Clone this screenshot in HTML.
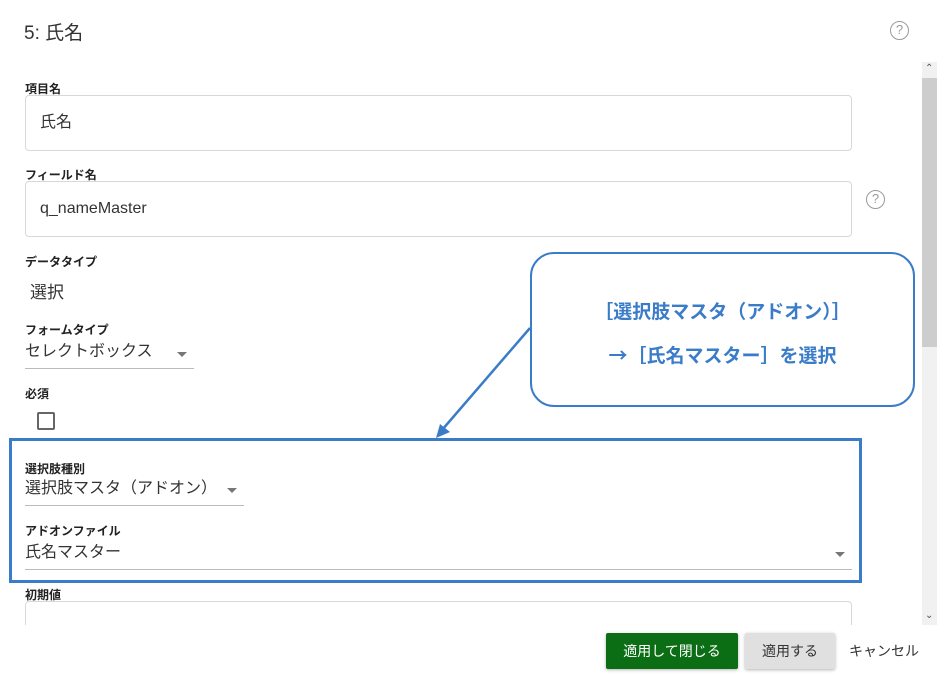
<!DOCTYPE html>
<html><head><meta charset="utf-8"><style>
*{margin:0;padding:0;box-sizing:border-box}
body{width:946px;height:675px;background:#fff;position:relative;overflow:hidden;font-family:"Liberation Sans","Noto Sans CJK JP",sans-serif;color:#333}
.a{position:absolute}
.lbl{position:absolute;font-size:12px;font-weight:bold;color:#222;left:25px}
.inp{position:absolute;left:25px;width:827px;height:56px;border:1px solid #d8d8d8;border-radius:4px;font-size:16px;padding:0 14px;line-height:54px;color:#333}
.sel{position:absolute;left:25px;font-size:16px;border-bottom:1px solid #bbb;height:30px;line-height:26px;color:#333}
.tri{position:absolute;width:0;height:0;border-left:5px solid transparent;border-right:5px solid transparent;border-top:5px solid #777}
.q{position:absolute;width:19px;height:19px;border:1.5px solid #999;border-radius:50%;color:#999;font-size:13px;text-align:center;line-height:16px}
</style></head><body>
<div class="a" style="left:24px;top:18px;font-size:19px;color:#333">5: 氏名</div>
<div class="q" style="left:890px;top:21px">?</div>

<div class="a" style="left:922px;top:62px;width:15px;height:563px;background:#f1f1f1"></div>
<div class="a" style="left:922px;top:78px;width:15px;height:269px;background:#cdcdcd"></div>
<div class="a" style="left:925px;top:63px;font-size:10px;color:#555">&#8963;</div>
<div class="a" style="left:925px;top:610px;font-size:10px;color:#555">&#8964;</div>

<div class="lbl" style="top:80px">項目名</div>
<div class="inp" style="top:95px">氏名</div>
<div class="lbl" style="top:166px">フィールド名</div>
<div class="inp" style="top:181px">q_nameMaster</div>
<div class="q" style="left:866px;top:190px">?</div>

<div class="lbl" style="top:253px">データタイプ</div>
<div class="a" style="left:30px;top:278px;font-size:17px">選択</div>
<div class="lbl" style="top:321px">フォームタイプ</div>
<div class="sel" style="top:339px;width:169px">セレクトボックス</div>
<div class="tri" style="left:177px;top:352px"></div>
<div class="lbl" style="top:385px">必須</div>
<div class="a" style="left:37px;top:412px;width:18px;height:18px;border:2px solid #666;border-radius:2px"></div>

<div class="a" style="left:9px;top:438px;width:853px;height:145px;border:3px solid #3a7cc8"></div>
<div class="lbl" style="top:460px">選択肢種別</div>
<div class="sel" style="top:476px;width:219px">選択肢マスタ（アドオン）</div>
<div class="tri" style="left:227px;top:488px"></div>
<div class="lbl" style="top:522px">アドオンファイル</div>
<div class="sel" style="top:540px;width:827px">氏名マスター</div>
<div class="tri" style="left:835px;top:552px"></div>

<div class="lbl" style="top:586px">初期値</div>
<div class="a" style="left:25px;top:601px;width:827px;height:40px;border:1px solid #d8d8d8;border-radius:4px"></div>
<div class="a" style="left:0;top:625px;width:946px;height:50px;background:#fff"></div>

<svg class="a" style="left:0;top:0" width="946" height="675"><line x1="530" y1="328" x2="442" y2="430" stroke="#3a7cc8" stroke-width="2.5"/><polygon points="436,438 440,424 450,432" fill="#3a7cc8"/></svg>
<div class="a" style="left:530px;top:252px;width:385px;height:155px;border:2.5px solid #3a7cc8;border-radius:24px;background:#fff;color:#3a7cc8;font-weight:bold;font-size:19px;text-align:center;padding-top:35px;line-height:44px;font-family:'Noto Sans CJK JP',sans-serif">［選択肢マスタ（アドオン）］<br>→［氏名マスター］を選択</div>

<div class="a" style="left:606px;top:633px;width:132px;height:36px;background:#0b6e14;border-radius:2px;color:#fff;font-size:14px;text-align:center;line-height:36px;box-shadow:0 1px 3px rgba(0,0,0,.3)">適用して閉じる</div>
<div class="a" style="left:745px;top:633px;width:90px;height:36px;background:#e0e0e0;border-radius:2px;color:#333;font-size:14px;text-align:center;line-height:36px;box-shadow:0 1px 3px rgba(0,0,0,.3)">適用する</div>
<div class="a" style="left:849px;top:641px;font-size:14px;color:#333">キャンセル</div>
</body></html>
